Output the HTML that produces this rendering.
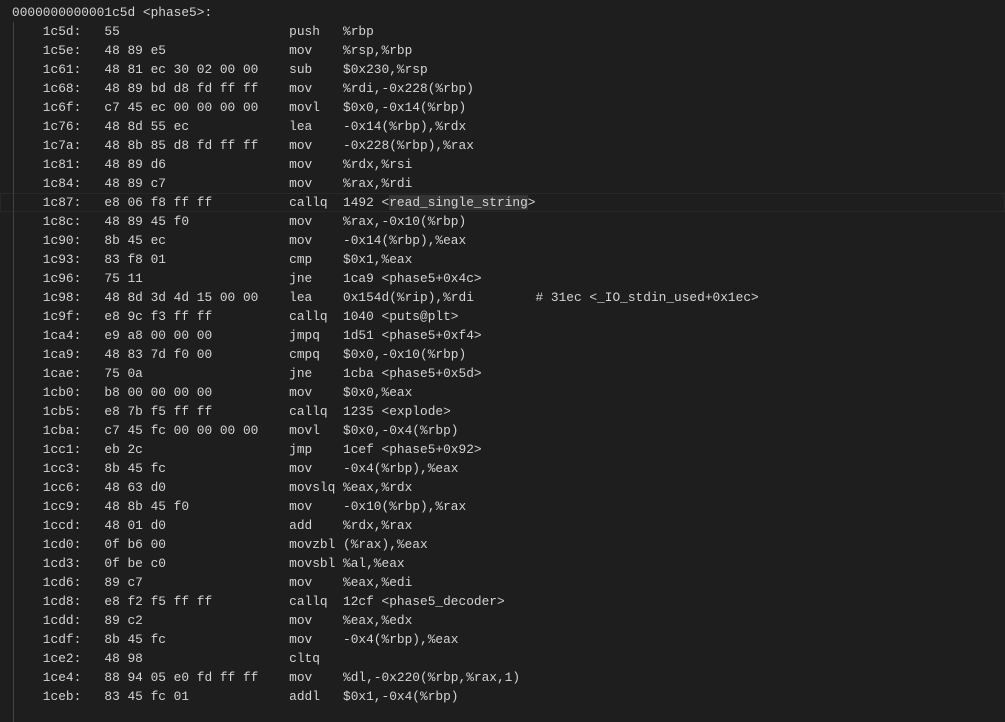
<!DOCTYPE html>
<html><head><meta charset="utf-8"><style>
html,body{margin:0;padding:0;background:#1e1e1e;width:1005px;height:707px;overflow:hidden}
pre{margin:0;padding:3px 0 0 12px;font-family:"Liberation Mono",monospace;font-size:12.83px;line-height:19px;color:#d4d4d4;position:relative}
.g{position:absolute;left:13px;top:22px;width:1px;height:700px;background:#404040}
.cur{position:absolute;left:0;top:193px;width:1003px;height:17px;border:1px solid #282828}
.w{background:#343434}
</style></head><body>
<div class="cur"></div>
<div class="g"></div>
<pre>0000000000001c5d &lt;phase5&gt;:
    1c5d:   55                      push   %rbp
    1c5e:   48 89 e5                mov    %rsp,%rbp
    1c61:   48 81 ec 30 02 00 00    sub    $0x230,%rsp
    1c68:   48 89 bd d8 fd ff ff    mov    %rdi,-0x228(%rbp)
    1c6f:   c7 45 ec 00 00 00 00    movl   $0x0,-0x14(%rbp)
    1c76:   48 8d 55 ec             lea    -0x14(%rbp),%rdx
    1c7a:   48 8b 85 d8 fd ff ff    mov    -0x228(%rbp),%rax
    1c81:   48 89 d6                mov    %rdx,%rsi
    1c84:   48 89 c7                mov    %rax,%rdi
    1c87:   e8 06 f8 ff ff          callq  1492 &lt;<span class="w">read_single_string</span>&gt;
    1c8c:   48 89 45 f0             mov    %rax,-0x10(%rbp)
    1c90:   8b 45 ec                mov    -0x14(%rbp),%eax
    1c93:   83 f8 01                cmp    $0x1,%eax
    1c96:   75 11                   jne    1ca9 &lt;phase5+0x4c&gt;
    1c98:   48 8d 3d 4d 15 00 00    lea    0x154d(%rip),%rdi        # 31ec &lt;_IO_stdin_used+0x1ec&gt;
    1c9f:   e8 9c f3 ff ff          callq  1040 &lt;puts@plt&gt;
    1ca4:   e9 a8 00 00 00          jmpq   1d51 &lt;phase5+0xf4&gt;
    1ca9:   48 83 7d f0 00          cmpq   $0x0,-0x10(%rbp)
    1cae:   75 0a                   jne    1cba &lt;phase5+0x5d&gt;
    1cb0:   b8 00 00 00 00          mov    $0x0,%eax
    1cb5:   e8 7b f5 ff ff          callq  1235 &lt;explode&gt;
    1cba:   c7 45 fc 00 00 00 00    movl   $0x0,-0x4(%rbp)
    1cc1:   eb 2c                   jmp    1cef &lt;phase5+0x92&gt;
    1cc3:   8b 45 fc                mov    -0x4(%rbp),%eax
    1cc6:   48 63 d0                movslq %eax,%rdx
    1cc9:   48 8b 45 f0             mov    -0x10(%rbp),%rax
    1ccd:   48 01 d0                add    %rdx,%rax
    1cd0:   0f b6 00                movzbl (%rax),%eax
    1cd3:   0f be c0                movsbl %al,%eax
    1cd6:   89 c7                   mov    %eax,%edi
    1cd8:   e8 f2 f5 ff ff          callq  12cf &lt;phase5_decoder&gt;
    1cdd:   89 c2                   mov    %eax,%edx
    1cdf:   8b 45 fc                mov    -0x4(%rbp),%eax
    1ce2:   48 98                   cltq
    1ce4:   88 94 05 e0 fd ff ff    mov    %dl,-0x220(%rbp,%rax,1)
    1ceb:   83 45 fc 01             addl   $0x1,-0x4(%rbp)
</pre>
</body></html>
